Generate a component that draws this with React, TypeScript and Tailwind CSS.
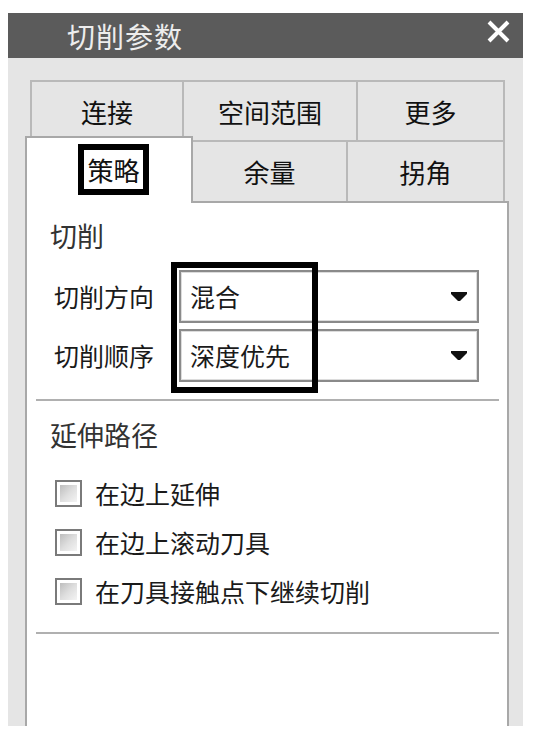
import { ReactNode } from 'react'

function Combo({ value }: { value: string }) {
  return (
    <div className="w-[300px] h-[53px] border-2 border-[#8a8a8a] shadow-[inset_0_0_0_1px_#dcdcdc] bg-white flex items-center justify-between pl-[9px] pr-[10px]">
      <span className="text-[25px] leading-none text-[#1a1a1a]">{value}</span>
      <svg width="16" height="9" viewBox="0 0 16 9">
        <polygon points="0,0 16,0 16,2 9,9 7,9 0,2" fill="#111" />
      </svg>
    </div>
  )
}

function CheckRow({ children }: { children: ReactNode }) {
  return (
    <div className="h-[49px] flex items-center pl-[28px] gap-[13px]">
      <div className="w-[27px] h-[27px] border-2 border-[#7a7a7a] bg-white p-[3px]">
        <div className="w-full h-full bg-gradient-to-br from-[#bdbdbd] via-[#dedede] to-[#f4f4f4]" />
      </div>
      <span className="text-[25px] leading-none text-[#1a1a1a]">{children}</span>
    </div>
  )
}

export default function App() {
  return (
    <div className="w-[535px] h-[733px] bg-white pt-[13px] pl-[8px] font-['Noto_Sans_CJK_SC','Noto_Sans',sans-serif]">
      <div className="w-[515px] h-[713px] flex flex-col">
        {/* Title bar */}
        <div className="h-[45px] shrink-0 bg-[#5b5b5b] flex justify-between pl-[59px] pr-[13px]">
          <span className="self-center text-[28px] leading-none tracking-[1px] text-[#ededed]">切削参数</span>
          <svg className="mt-[7px]" width="23" height="23" viewBox="0 0 23 23">
            <path d="M2 2 L21 21 M21 2 L2 21" stroke="#ffffff" strokeWidth="4" />
          </svg>
        </div>

        {/* Body */}
        <div className="flex-1 min-h-0 bg-[#e5e5e5] pt-[22px] flex flex-col">
          {/* Tabs, back row */}
          <div className="ml-[22px] h-[60px] flex shrink-0 text-[26px] text-[#111]">
            <div className="w-[152px] border-l-2 border-t-2 border-[#b9b9b9] flex items-center justify-center">连接</div>
            <div className="w-[174px] border-l-2 border-t-2 border-[#b9b9b9] flex items-center justify-center">空间范围</div>
            <div className="w-[149px] border-l-2 border-t-2 border-r-2 border-[#b9b9b9] flex items-center justify-center">更多</div>
          </div>

          {/* Tabs, front row */}
          <div className="-mt-[4px] h-[65px] shrink-0 flex items-end text-[26px] text-[#111]">
            <div className="relative z-10 ml-[17px] w-[168px] h-[67px] -mb-[2px] bg-white border-2 border-b-0 border-[#a8a8a8] flex justify-center pt-[6px] pl-[9px]">
              <span className="h-[51px] border-[6px] border-black px-[3px] leading-[39px] text-[26px]">策略</span>
            </div>
            <div className="w-[155px] h-[61px] border-t-2 border-r-2 border-[#b9b9b9] flex items-center justify-center">余量</div>
            <div className="w-[157px] h-[61px] border-t-2 border-r-2 border-[#b9b9b9] flex items-center justify-center">拐角</div>
          </div>

          {/* Panel */}
          <div className="relative ml-[17px] w-[484px] flex-1 bg-white border-2 border-b-0 border-[#a8a8a8]">
            <div className="mt-[17px] pl-[23px] text-[27px] leading-[32px] text-[#333]">切削</div>

            <div className="mt-[18px] flex flex-col gap-[6px]">
              <div className="flex items-center pl-[27px]">
                <span className="w-[125px] text-[25px] leading-none text-[#1a1a1a]">切削方向</span>
                <Combo value="混合" />
              </div>
              <div className="flex items-center pl-[27px]">
                <span className="w-[125px] text-[25px] leading-none text-[#1a1a1a]">切削顺序</span>
                <Combo value="深度优先" />
              </div>
            </div>

            <div className="mt-[17px] ml-[9px] w-[463px] h-[2px] bg-[#b0b0b0]" />

            <div className="mt-[17px] pl-[23px] text-[27px] leading-[34px] text-[#333]">延伸路径</div>

            <div className="mt-[17px] flex flex-col">
              <CheckRow>在边上延伸</CheckRow>
              <CheckRow>在边上滚动刀具</CheckRow>
              <CheckRow>在刀具接触点下继续切削</CheckRow>
            </div>

            <div className="mt-[16px] ml-[9px] w-[463px] h-[2px] bg-[#b0b0b0]" />

            {/* highlight frame drawn over the combo values */}
            <div className="absolute left-[144px] top-[59px] w-[147px] h-[131px] border-[6px] border-black" />
          </div>
        </div>
      </div>
    </div>
  )
}
